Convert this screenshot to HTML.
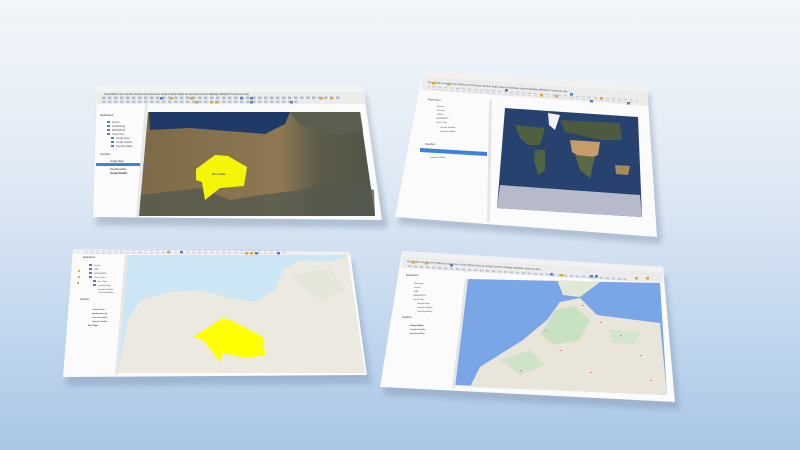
<!DOCTYPE html>
<html><head><meta charset="utf-8"><style>
html,body{margin:0;padding:0;width:800px;height:450px;overflow:hidden}
body{background:linear-gradient(180deg,#f2f6fa 0%,#dfe9f4 40%,#bcd3ec 80%,#a9c6e6 100%)}
svg{position:absolute;left:0;top:0}
text{font-family:"Liberation Sans",sans-serif}
</style></head><body>
<svg width="800" height="450" viewBox="0 0 800 450">
<defs>
<filter id="sh" x="-10%" y="-10%" width="120%" height="130%"><feGaussianBlur stdDeviation="3"/></filter>
<linearGradient id="sat" x1="0" y1="0" x2="1" y2="0"><stop offset="0" stop-color="#7d6a48"/><stop offset="0.6" stop-color="#8e7853"/><stop offset="0.75" stop-color="#5d5c4a"/><stop offset="1" stop-color="#4f5646"/></linearGradient>
<pattern id="ic" width="6" height="4" patternUnits="userSpaceOnUse"><rect x="0" y="0.5" width="3.5" height="2.5" fill="#8a9bb5"/></pattern>
</defs>
<g fill="#7f94ad" opacity="0.45" filter="url(#sh)">
<polygon points="100,95 366,95 388,228 96,225"/>
<polygon points="426,78 650,94 662,244 398,224"/>
<polygon points="76,258 353,261 372,384 66,386"/>
<polygon points="405,260 666,276 680,410 383,395"/>
</g>

<!-- PANEL 1 -->
<polygon points="97,86 363,86 382,220 93,217" fill="#fbfbfb"/>
<polygon points="97,86 363,86 364,92 97,92" fill="#f3f3f3"/>
<polygon points="97,92 364,92 366,104 97,104" fill="#ececec"/>
<text x="104" y="95" font-size="2.6" fill="#444">Projet  Éditer  Vue  Couche  Préférences  Extension  Vecteur  Raster  Base de données  Internet  Maillage  MMQGIS  Traitement  Aide</text>
<rect x="100" y="96.5" width="240" height="3" fill="url(#ic)" opacity="0.6"/>
<rect x="100" y="100.5" width="200" height="3" fill="url(#ic)" opacity="0.5"/>
<g fill="#d8a93a"><rect x="170" y="97" width="3" height="2.5"/><rect x="190" y="97" width="3" height="2.5"/><rect x="320" y="97" width="3" height="2.5"/><rect x="330" y="97" width="3" height="2.5"/><rect x="195" y="101" width="3" height="2.5"/><rect x="210" y="101" width="3" height="2.5"/><rect x="215" y="101" width="3" height="2.5"/></g>
<g fill="#5a82b8"><rect x="160" y="97" width="3" height="2.5"/><rect x="240" y="97" width="3" height="2.5"/><rect x="250" y="97" width="3" height="2.5"/><rect x="250" y="101" width="3" height="2.5"/><rect x="290" y="101" width="3" height="2.5"/></g>
<polygon points="148,112 360,112 375,216 139,216" fill="url(#sat)"/>
<polygon points="149,112 290,112 285,124 265,134 240,132 190,128 150,130" fill="#1f3a66"/>
<polygon points="290,112 360,112 363,130 340,135 300,125" fill="#5b5f52"/>
<polygon points="140,195 200,188 230,200 260,195 300,190 340,180 374,190 375,216 139,216" fill="#555a4f" opacity="0.8"/>
<polygon points="196,169 215,155 228,156 247,167 244,186 220,188 205,200 202,182 196,180" fill="#f5f50a"/>
<text x="212" y="175" font-size="2.6" fill="#333">Beni Hadifa</text>
<text x="100" y="116" font-size="2.6" fill="#333">Explorateur</text>
<g fill="#5a7fb8"><rect x="107" y="121" width="3" height="2"/><rect x="107" y="125" width="3" height="2"/><rect x="107" y="129" width="3" height="2"/><rect x="107" y="133" width="3" height="2"/><rect x="111" y="137" width="3" height="2"/><rect x="111" y="141" width="3" height="2"/><rect x="111" y="145" width="3" height="2"/></g>
<g font-size="2.3" fill="#555"><text x="112" y="123">Favoris</text><text x="112" y="127">GeoPackage</text><text x="112" y="131">WMS/WMTS</text><text x="112" y="135">Vector Tiles</text><text x="116" y="139">Google Maps</text><text x="116" y="143">Google Satellite</text><text x="116" y="147">OpenStreetMap</text></g>
<text x="100" y="155" font-size="2.6" fill="#333">Couches</text>
<polygon points="96,163 145,163 145,166 96,166" fill="#3b82d8"/>
<g font-size="2.3" fill="#333"><text x="110" y="162">Google Maps</text><text x="110" y="170">OpenStreetMap</text><text x="110" y="174" font-weight="bold">Google Satellite</text></g>
<polygon points="145,104 148,104 139,217 136,217" fill="#e8e8e8"/>

<!-- PANEL 2 -->
<polygon points="423,69 647,85 657,237 395,217" fill="#fbfbfb"/>
<polygon points="423,69 647,85 647,92 422,76" fill="#f1f1f1"/>
<polygon points="422,76 647,92 648,106 421,90" fill="#ececec"/>
<text x="428" y="83" font-size="2.5" fill="#444" transform="rotate(3.8 428 83)">Projet  Éditer  Vue  Couche  Préférences  Extension  Vecteur  Raster  Base de données  Internet  Maillage  MMQGIS  Traitement  Aide</text>
<rect x="428" y="86" width="210" height="3" fill="url(#ic)" opacity="0.5" transform="rotate(3.8 428 86)"/>
<g fill="#d8a93a"><rect x="432" y="82" width="3" height="2.5"/><rect x="447" y="83" width="3" height="2.5"/><rect x="540" y="94" width="3" height="2.5"/><rect x="555" y="95" width="3" height="2.5"/><rect x="600" y="97" width="3" height="2.5"/></g>
<g fill="#5a82b8"><rect x="505" y="89" width="3" height="2.5"/><rect x="570" y="93" width="3" height="2.5"/><rect x="590" y="100" width="3" height="2.5"/><rect x="627" y="102" width="3" height="2.5"/></g>
<polygon points="505,108 638,117 642,217 497,208" fill="#27426f"/>
<polygon points="500,185 640,195 642,217 497,208" fill="#b6bacb"/>
<polygon points="548,113 560,115 555,130 549,125" fill="#f2f2f2"/>
<polygon points="515,125 545,128 540,145 528,145 520,138" fill="#4f6040"/>
<polygon points="535,150 545,150 545,170 538,175 534,160" fill="#4e6544"/>
<polygon points="570,140 600,142 598,155 585,160 572,152" fill="#c79b6a"/>
<polygon points="575,155 595,157 590,178 580,170" fill="#5a6a44"/>
<polygon points="560,120 620,123 622,140 600,140 565,132" fill="#4d5a40"/>
<polygon points="615,165 630,166 628,175 616,174" fill="#a58b5a"/>
<text x="428" y="100" font-size="2.5" fill="#333" transform="rotate(3.8 428 100)">Explorateur</text>
<g font-size="2.2" fill="#555"><text x="437" y="107">Favoris</text><text x="437" y="111">Dossiers</text><text x="437" y="115">GPKG</text><text x="436" y="119">WMS/WMTS</text><text x="436" y="123">Vector Tiles</text><text x="440" y="128">Google Satellite</text><text x="440" y="132">OpenStreetMap</text></g>
<text x="425" y="145" font-size="2.5" fill="#333">Couches</text>
<polygon points="420,148 487,152 487,156 420,152" fill="#3b82d8"/>
<text x="430" y="158" font-size="2.2" fill="#555">OpenStreetMap</text>
<polygon points="489,100 492,100 490,222 487,222" fill="#e6e6e6"/>

<!-- PANEL 3 -->
<polygon points="73,249 350,252 367,375 63,377" fill="#fbfbfb"/>
<polygon points="73,249 350,252 350,256 73,254" fill="#efefef"/>
<rect x="85" y="250.5" width="200" height="3" fill="url(#ic)" opacity="0.45"/>
<g fill="#d8a93a"><rect x="167" y="251" width="3" height="2.5"/><rect x="245" y="252" width="3" height="2.5"/><rect x="250" y="252" width="3" height="2.5"/></g>
<g fill="#5a82b8"><rect x="180" y="251" width="3" height="2.5"/><rect x="255" y="252" width="3" height="2.5"/><rect x="277" y="252" width="3" height="2.5"/></g>
<polygon points="128,255 347,255 365,373 118,373" fill="#cde6f5"/>
<polygon points="140,300 170,292 200,290 230,298 255,302 275,290 283,270 300,260 330,262 348,257 365,373 118,373 128,320" fill="#ece9e1"/>
<polygon points="290,275 330,268 345,290 320,300" fill="#e3e6d8"/>
<polygon points="193,337 223,318 230,320 263,337 265,355 247,358 223,353 220,362 203,340" fill="#ffff00"/>
<text x="83" y="258" font-size="2.4" fill="#333">Explorateur</text>
<g fill="#5a7fb8"><rect x="89" y="264" width="3" height="2"/><rect x="89" y="268" width="3" height="2"/><rect x="89" y="272" width="3" height="2"/><rect x="89" y="276" width="3" height="2"/><rect x="93" y="280" width="3" height="2"/><rect x="93" y="284" width="3" height="2"/></g>
<g font-size="2.2" fill="#555"><text x="94" y="266">Oracle</text><text x="94" y="270">SAP</text><text x="94" y="274">WMS/WMTS</text><text x="94" y="278">Vector Tiles</text><text x="98" y="282">Esri Topo</text><text x="98" y="286">Google Maps</text><text x="98" y="290">Google Satellite</text><text x="98" y="293">OpenStreetMap</text></g>
<text x="80" y="300" font-size="2.4" fill="#333">Couches</text>
<g font-size="2.2" fill="#333"><text x="92" y="310">Google Maps</text><text x="92" y="314" font-weight="bold">communes_tg</text><text x="92" y="318">OpenStreetMap</text><text x="92" y="322">Google Satellite</text><text x="88" y="326" font-weight="bold">Esri Topo</text></g>
<polygon points="125,255 128,255 118,375 115,375" fill="#e6e6e6"/>
<g fill="#e0b040"><rect x="78" y="270" width="2" height="2"/><rect x="78" y="276" width="2" height="2"/><rect x="77" y="282" width="2" height="2"/></g>

<!-- PANEL 4 -->
<polygon points="402,251 663,267 675,402 380,387" fill="#fbfbfb"/>
<polygon points="402,251 663,267 663,272 402,256" fill="#f1f1f1"/>
<polygon points="402,256 663,272 663,283 401,268" fill="#ececec"/>
<text x="407" y="262" font-size="2.4" fill="#444" transform="rotate(3.5 407 262)">Projet  Éditer  Vue  Couche  Préférences  Extension  Vecteur  Raster  Base de données  Internet  Maillage  MMQGIS  Traitement  Aide</text>
<rect x="407" y="265" width="220" height="3" fill="url(#ic)" opacity="0.45" transform="rotate(3.5 407 265)"/>
<g fill="#d8a93a"><rect x="412" y="261" width="3" height="2.5"/><rect x="425" y="262" width="3" height="2.5"/><rect x="560" y="274" width="3" height="2.5"/><rect x="635" y="277" width="3" height="2.5"/><rect x="646" y="277" width="3" height="2.5"/></g>
<g fill="#5a82b8"><rect x="450" y="264" width="3" height="2.5"/><rect x="550" y="273" width="3" height="2.5"/><rect x="590" y="275" width="3" height="2.5"/><rect x="595" y="275" width="3" height="2.5"/></g>
<polygon points="468,279 660,283 667,395 455,385" fill="#7aa6e8"/>
<polygon points="557,280 600,282 580,297 563,295" fill="#e1e8d6"/>
<polygon points="560,302 580,298 597,315 660,323 667,395 470,387 480,367 523,340 547,320" fill="#e9e5da"/>
<polygon points="555,310 575,306 590,320 580,340 555,345 540,335" fill="#c9e1c3"/>
<polygon points="500,360 530,350 545,365 520,375" fill="#cfe3c8"/>
<polygon points="610,330 640,332 635,345 612,342" fill="#d3e5cc"/>
<g fill="#e07070"><rect x="582" y="305" width="1.5" height="1"/><rect x="600" y="322" width="1.5" height="1"/><rect x="620" y="335" width="1.5" height="1"/><rect x="560" y="350" width="1.5" height="1"/><rect x="640" y="355" width="1.5" height="1"/><rect x="520" y="370" width="1.5" height="1"/><rect x="590" y="372" width="1.5" height="1"/><rect x="650" y="380" width="1.5" height="1"/><rect x="545" y="330" width="1.5" height="1"/></g>
<text x="406" y="276" font-size="2.4" fill="#333">Explorateur</text>
<g font-size="2.2" fill="#555"><text x="414" y="284">Mosaïque</text><text x="414" y="288">Oracle</text><text x="414" y="292">SAP</text><text x="413" y="296">WMS/WMTS</text><text x="413" y="300">Vector Tiles</text><text x="417" y="304">Google Maps</text><text x="417" y="308">Google Satellite</text><text x="417" y="312">OpenStreetMap</text></g>
<text x="402" y="318" font-size="2.4" fill="#333">Couches</text>
<g font-size="2.2" fill="#333"><text x="410" y="326" font-weight="bold">Google Maps</text><text x="410" y="330">Google Satellite</text><text x="409" y="334">OpenStreetMap</text></g>
<polygon points="465,279 468,279 455,388 452,388" fill="#e6e6e6"/>
</svg>
</body></html>
